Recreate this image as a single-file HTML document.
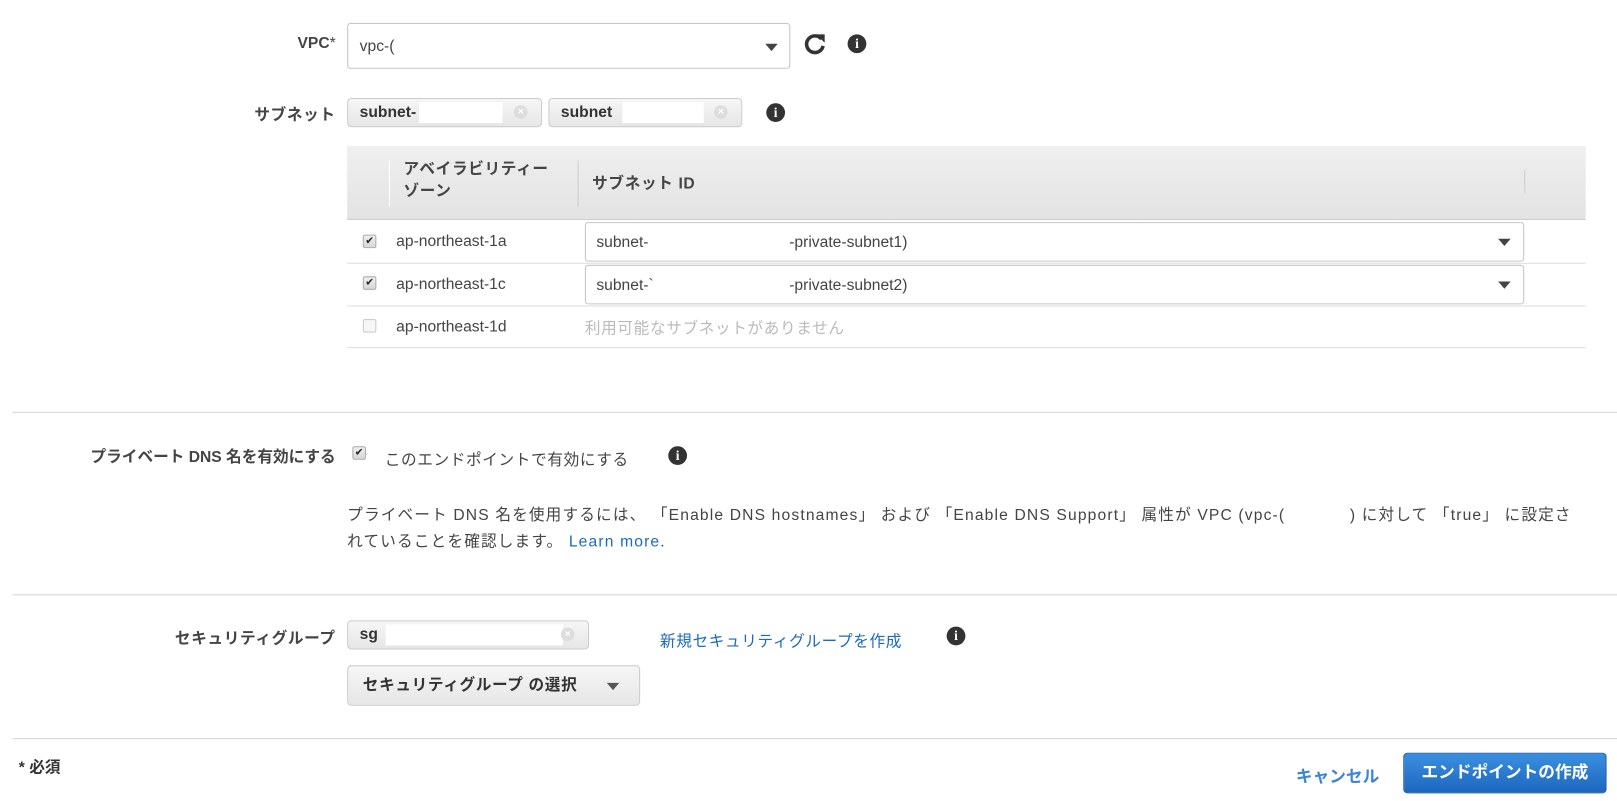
<!DOCTYPE html>
<html><head><meta charset="utf-8"><style>
html,body{margin:0;padding:0;background:#fff;overflow:hidden;width:1617px;height:801px}
#w{position:absolute;left:0;top:0;width:1551px;height:768px;transform:scale(1.04255);transform-origin:0 0;font-family:"Liberation Sans","Noto Sans CJK JP",sans-serif;color:#444;font-size:15px}
.a{position:absolute;white-space:nowrap}
.lbl{position:absolute;right:1229px;font-weight:bold;color:#444;white-space:nowrap;text-align:right}
.info{position:absolute;width:18px;height:18px;border-radius:50%;background:#333;color:#fff;font:bold 13px "Liberation Serif",serif;text-align:center;line-height:18px}
.sel{position:absolute;border:1px solid #c6c6c6;border-radius:3px;background:#fff;box-sizing:border-box}
.caret{position:absolute;width:0;height:0;border-left:6px solid transparent;border-right:6px solid transparent;border-top:7px solid #444}
.tag{position:absolute;height:28px;box-sizing:border-box;border:1px solid #ccc;border-radius:4px;background:linear-gradient(#f6f6f6,#e6e6e6);font-weight:bold;color:#333;line-height:26px;padding-left:11px}
.tag .mask{position:absolute;top:3px;height:20px;background:#fff}
.x{position:absolute;right:13px;top:6px;width:13px;height:13px;border-radius:50%;background:#ddd;color:#fff;font-size:10px;line-height:13px;text-align:center}
.cb{position:absolute;width:11px;height:11px;border:1px solid #aaa;border-radius:2px;background:linear-gradient(#eee,#d8d8d8);font-size:10px;line-height:11px;text-align:center;color:#222}
.hr{position:absolute;left:12px;width:1539px;height:1px;background:#d5d5d5}
.row{position:absolute;left:333px;width:1188px;height:1px;background:#ddd}
.j{letter-spacing:0.6px}
</style></head><body><div id="w">
<div class="lbl" style="top:33px">VPC<span style="font-weight:normal">*</span></div>
<div class="sel" style="left:333px;top:22px;width:425px;height:44px"><span class="a" style="left:11px;top:13px;color:#444">vpc-(</span><div class="caret" style="left:400px;top:19px"></div></div>
<svg class="a" style="left:771px;top:31px" width="22" height="22" viewBox="0 0 22 22"><path d="M17 6.5 A8 8 0 1 0 18.5 13" fill="none" stroke="#333" stroke-width="3.4"/><path d="M12 2 L20 2 L20 10 Z" fill="#333"/></svg>
<div class="info" style="left:813px;top:33px">i</div>

<div class="lbl j" style="top:99px">サブネット</div>
<div class="tag" style="left:333px;top:94px;width:187px">subnet-<div class="mask" style="left:68px;width:80px"></div><div class="x">×</div></div>
<div class="tag" style="left:526px;top:94px;width:186px">subnet<div class="mask" style="left:70px;width:78px"></div><div class="x">×</div></div>
<div class="info" style="left:735px;top:99px">i</div>

<div class="a" style="left:333px;top:140px;width:1188px;height:70px;background:linear-gradient(#efefef,#e3e3e3)"></div>
<div class="a" style="left:373px;top:154px;width:1px;height:44px;background:#fff"></div>
<div class="a" style="left:554px;top:154px;width:1px;height:44px;background:#ccc"></div>
<div class="a" style="left:1462px;top:163px;width:1px;height:22px;background:#ccc"></div>
<div class="a j" style="left:387px;top:152px;font-weight:bold;line-height:21px">アベイラビリティー<br>ゾーン</div>
<div class="a j" style="left:568px;top:165px;font-weight:bold">サブネット ID</div>
<div class="row" style="top:210px;background:#ccc"></div>
<div class="row" style="top:252px"></div>
<div class="row" style="top:293px"></div>
<div class="row" style="top:333px"></div>
<div class="cb" style="left:348px;top:225px">✔</div>
<div class="cb" style="left:348px;top:265px">✔</div>
<div class="cb" style="left:348px;top:306px;background:#f6f6f6;border-color:#ccc"></div>
<div class="a" style="left:380px;top:223px">ap-northeast-1a</div>
<div class="a" style="left:380px;top:264px">ap-northeast-1c</div>
<div class="a" style="left:380px;top:305px">ap-northeast-1d</div>
<div class="sel" style="left:561px;top:213px;width:901px;height:38px"><span class="a" style="left:10px;top:10px">subnet-</span><span class="a" style="left:195px;top:10px">-private-subnet1)</span><div class="caret" style="left:875px;top:15px"></div></div>
<div class="sel" style="left:561px;top:254px;width:901px;height:38px"><span class="a" style="left:10px;top:10px">subnet-`</span><span class="a" style="left:195px;top:10px">-private-subnet2)</span><div class="caret" style="left:875px;top:15px"></div></div>
<div class="a j" style="left:561px;top:304px;color:#bbb">利用可能なサブネットがありません</div>

<div class="hr" style="top:395px"></div>
<div class="lbl" style="top:427px">プライベート DNS 名を有効にする</div>
<div class="cb" style="left:338px;top:428px">✔</div>
<div class="a j" style="left:369px;top:430px">このエンドポイントで有効にする</div>
<div class="info" style="left:641px;top:428px">i</div>
<div class="a" style="left:333px;top:482px;line-height:25px;letter-spacing:1.1px">プライベート DNS 名を使用するには、 「Enable DNS hostnames」 および 「Enable DNS Support」 属性が VPC (vpc-(<span style="display:inline-block;width:62px"></span>) に対して 「true」 に設定さ<br>れていることを確認します。 <span style="color:#1a6bbf">Learn more</span>.</div>

<div class="hr" style="top:570px"></div>
<div class="lbl j" style="top:601px">セキュリティグループ</div>
<div class="tag" style="left:333px;top:595px;width:232px">sg<div class="mask" style="left:36px;width:170px"></div><div class="x">×</div></div>
<div class="a j" style="left:633px;top:604px;color:#1a6bbf">新規セキュリティグループを作成</div>
<div class="info" style="left:908px;top:601px">i</div>
<div class="tag j" style="left:333px;top:638px;width:281px;height:39px;line-height:37px;padding-left:14px">セキュリティグループ の選択<div class="caret" style="left:248px;top:16px;border-top-color:#555"></div></div>

<div class="hr" style="top:708px"></div>
<div class="a" style="left:18px;top:725px;font-weight:bold;color:#333">* 必須</div>
<div class="a" style="left:1243px;top:731px;color:#3a86d6;font-weight:bold;font-size:16px">キャンセル</div>
<div class="a" style="left:1346px;top:722px;width:195px;height:39px;box-sizing:border-box;border:1px solid #1a5fa8;border-radius:4px;background:linear-gradient(#3a8fe0,#1d67bf);color:#fff;font-weight:bold;font-size:16px;text-align:center;line-height:37px">エンドポイントの作成</div>
</div></body></html>
